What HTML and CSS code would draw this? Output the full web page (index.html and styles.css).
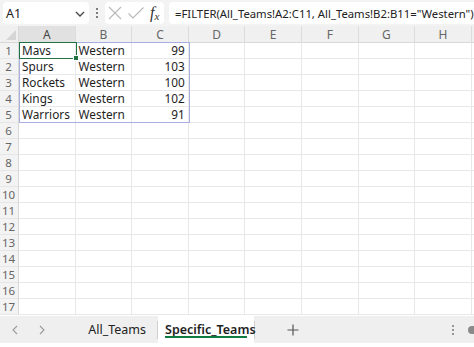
FILE: index.html
```html
<!DOCTYPE html>
<html>
<head>
<meta charset="utf-8">
<link rel="stylesheet" href="styles.css">
</head>
<body>
<div class="app">
  <div class="topbar">
    <div class="namebox">
      <span class="name">A1</span>
      <svg class="chev" width="10" height="6" viewBox="0 0 10 6"><path d="M1 1 L5 5 L9 1" fill="none" stroke="#444" stroke-width="1.3"/></svg>
    </div>
    <div class="vdots"><span></span><span></span><span></span></div>
    <div class="fxbox">
      <svg width="16" height="16" viewBox="0 0 16 16"><path d="M2 2 L14 14 M14 2 L2 14" stroke="#b8b8b8" stroke-width="1.1" fill="none"/></svg>
      <svg width="18" height="16" viewBox="0 0 18 16"><path d="M1.5 8.5 L6 13 L16.5 2.5" stroke="#b8b8b8" stroke-width="1.1" fill="none"/></svg>
      <span class="fx">f<sub>x</sub></span>
    </div>
    <div class="formula">=FILTER(All_Teams!A2:C11, All_Teams!B2:B11="Western")</div>
  </div>
  <div class="sheet">
    <div class="grid">
      <div class="corner"><svg width="10" height="10" viewBox="0 0 10 10"><path d="M10 0 L10 10 L0 10 Z" fill="#d6d6d6"/></svg></div>
      <div class="ch sel">A</div><div class="ch">B</div><div class="ch">C</div><div class="ch">D</div><div class="ch">E</div><div class="ch">F</div><div class="ch">G</div><div class="ch">H</div><div class="ch"></div>

      <div class="rh">1</div><div class="c">Mavs</div><div class="c">Western</div><div class="c n">99</div><div class="c"></div><div class="c"></div><div class="c"></div><div class="c"></div><div class="c"></div><div class="c"></div>
      <div class="rh">2</div><div class="c">Spurs</div><div class="c">Western</div><div class="c n">103</div><div class="c"></div><div class="c"></div><div class="c"></div><div class="c"></div><div class="c"></div><div class="c"></div>
      <div class="rh">3</div><div class="c">Rockets</div><div class="c">Western</div><div class="c n">100</div><div class="c"></div><div class="c"></div><div class="c"></div><div class="c"></div><div class="c"></div><div class="c"></div>
      <div class="rh">4</div><div class="c">Kings</div><div class="c">Western</div><div class="c n">102</div><div class="c"></div><div class="c"></div><div class="c"></div><div class="c"></div><div class="c"></div><div class="c"></div>
      <div class="rh">5</div><div class="c">Warriors</div><div class="c">Western</div><div class="c n">91</div><div class="c"></div><div class="c"></div><div class="c"></div><div class="c"></div><div class="c"></div><div class="c"></div>
      <div class="rh">6</div><div class="c"></div><div class="c"></div><div class="c"></div><div class="c"></div><div class="c"></div><div class="c"></div><div class="c"></div><div class="c"></div><div class="c"></div>
      <div class="rh">7</div><div class="c"></div><div class="c"></div><div class="c"></div><div class="c"></div><div class="c"></div><div class="c"></div><div class="c"></div><div class="c"></div><div class="c"></div>
      <div class="rh">8</div><div class="c"></div><div class="c"></div><div class="c"></div><div class="c"></div><div class="c"></div><div class="c"></div><div class="c"></div><div class="c"></div><div class="c"></div>
      <div class="rh">9</div><div class="c"></div><div class="c"></div><div class="c"></div><div class="c"></div><div class="c"></div><div class="c"></div><div class="c"></div><div class="c"></div><div class="c"></div>
      <div class="rh">10</div><div class="c"></div><div class="c"></div><div class="c"></div><div class="c"></div><div class="c"></div><div class="c"></div><div class="c"></div><div class="c"></div><div class="c"></div>
      <div class="rh">11</div><div class="c"></div><div class="c"></div><div class="c"></div><div class="c"></div><div class="c"></div><div class="c"></div><div class="c"></div><div class="c"></div><div class="c"></div>
      <div class="rh">12</div><div class="c"></div><div class="c"></div><div class="c"></div><div class="c"></div><div class="c"></div><div class="c"></div><div class="c"></div><div class="c"></div><div class="c"></div>
      <div class="rh">13</div><div class="c"></div><div class="c"></div><div class="c"></div><div class="c"></div><div class="c"></div><div class="c"></div><div class="c"></div><div class="c"></div><div class="c"></div>
      <div class="rh">14</div><div class="c"></div><div class="c"></div><div class="c"></div><div class="c"></div><div class="c"></div><div class="c"></div><div class="c"></div><div class="c"></div><div class="c"></div>
      <div class="rh">15</div><div class="c"></div><div class="c"></div><div class="c"></div><div class="c"></div><div class="c"></div><div class="c"></div><div class="c"></div><div class="c"></div><div class="c"></div>
      <div class="rh">16</div><div class="c"></div><div class="c"></div><div class="c"></div><div class="c"></div><div class="c"></div><div class="c"></div><div class="c"></div><div class="c"></div><div class="c"></div>
      <div class="rh">17</div><div class="c"></div><div class="c"></div><div class="c"></div><div class="c"></div><div class="c"></div><div class="c"></div><div class="c"></div><div class="c"></div><div class="c"></div>
    </div>
    <div class="spill"></div>
    <div class="active"><span class="handle"></span></div>
  </div>
  <div class="tabbar">
    <div class="nav">
      <svg width="8" height="10" viewBox="0 0 8 10"><path d="M6 1 L2 5 L6 9" fill="none" stroke="#9a9a9a" stroke-width="1.1"/></svg>
      <svg width="8" height="10" viewBox="0 0 8 10"><path d="M2 1 L6 5 L2 9" fill="none" stroke="#9a9a9a" stroke-width="1.1"/></svg>
    </div>
    <div class="tab first">All_Teams</div>
    <div class="sep"></div>
    <div class="tab cur">Specific_Teams</div>
    <div class="sep"></div>
    <div class="plus">
      <svg width="12" height="12" viewBox="0 0 12 12"><path d="M6 0.5 V11.5 M0.5 6 H11.5" stroke="#555" stroke-width="1.2"/></svg>
    </div>
    <div class="spacer"></div>
    <div class="vdots small"><span></span><span></span><span></span></div>
    <div class="thumb"></div>
  </div>
</div>
</body>
</html>
```

FILE: styles.css
```css
* { box-sizing: border-box; }
html, body { margin: 0; padding: 0; }
body {
  width: 474px;
  height: 347px;
  overflow: hidden;
  background: #ffffff;
  font-family: "Noto Sans", "Open Sans", sans-serif;
  color: #222;
}
.app { display: flex; flex-direction: column; width: 474px; height: 347px; }

.topbar {
  height: 26px;
  background: #f3f3f3;
  display: flex;
  align-items: center;
  padding: 2px 0 2px 3px;
  flex: none;
}
.namebox {
  width: 86px;
  height: 22px;
  background: #fff;
  border-radius: 4px;
  display: flex;
  align-items: center;
  justify-content: space-between;
  padding: 0 4px 0 3px;
  font-size: 12.5px;
  color: #222;
}
.namebox .chev { margin-top: 1px; }
.vdots {
  width: 16px;
  display: flex;
  flex-direction: column;
  align-items: center;
  gap: 2px;
}
.vdots span { width: 2px; height: 2px; background: #555; border-radius: 1px; display: block; }
.fxbox {
  width: 59px;
  height: 22px;
  background: #fff;
  border-radius: 4px;
  display: flex;
  align-items: center;
  gap: 4px;
  padding-left: 2px;
}
.fx {
  font-family: "Liberation Serif", "DejaVu Serif", serif;
  font-style: italic;
  font-size: 16px;
  color: #333;
  margin-left: 1px;
  line-height: 1;
}
.fx sub { font-size: 11px; vertical-align: -2px; }
.formula {
  flex: 1;
  height: 22px;
  margin-left: 5px;
  background: #fff;
  border-radius: 4px 0 0 4px;
  display: flex;
  align-items: center;
  padding-left: 6px;
  font-size: 11.3px;
  white-space: nowrap;
  overflow: hidden;
  color: #222;
}

.sheet { position: relative; flex: 1; overflow: hidden; }
.grid {
  display: grid;
  grid-template-columns: 19px repeat(8, 56.6px) 1fr;
  grid-template-rows: 17px;
  grid-auto-rows: 16px;
}
.corner {
  background: #f0f0f0;
  border-right: 1px solid #d8d8d8;
  border-bottom: 1px solid #d8d8d8;
  display: flex;
  align-items: flex-end;
  justify-content: flex-end;
  padding: 0 2px 2px 0;
}
.ch {
  background: #f0f0f0;
  border-right: 1px solid #dcdcdc;
  border-bottom: 1px solid #d8d8d8;
  font-size: 12px;
  color: #666;
  display: flex;
  align-items: center;
  justify-content: center;
}
.ch.sel { background: #e1e1e1; color: #444; }
.rh {
  background: #f3f3f3;
  border-right: 1px solid #d8d8d8;
  border-bottom: 1px solid #e6e6e6;
  font-size: 11.5px;
  color: #666;
  display: flex;
  align-items: center;
  justify-content: center;
  padding-right: 1px;
}
.c {
  border-right: 1px solid #e8e8e8;
  border-bottom: 1px solid #e8e8e8;
  font-size: 11.8px;
  line-height: 15px;
  color: #1e1e1e;
  display: flex;
  align-items: center;
  padding: 0 3px;
  white-space: nowrap;
  overflow: visible;
}
.c.n { justify-content: flex-end; }

.spill {
  position: absolute;
  left: 19px;
  top: 16px;
  width: 171px;
  height: 81px;
  border: 1px solid #a9aee0;
  pointer-events: none;
}
.active {
  position: absolute;
  left: 19px;
  top: 16px;
  width: 58px;
  height: 17px;
  border: 1.5px solid #217346;
}
.handle {
  position: absolute;
  right: -3px;
  bottom: -3px;
  width: 4px;
  height: 4px;
  background: #217346;
  border: 1px solid #fff;
  box-sizing: content-box;
}

.tabbar {
  flex: none;
  height: 27px;
  margin-bottom: 4px;
  background: #efefef;
  display: flex;
  align-items: center;
}
.nav {
  width: 70px;
  display: flex;
  gap: 19px;
  padding-left: 11px;
}
.tab {
  font-size: 12.5px;
  color: #222;
  height: 100%;
  display: flex;
  align-items: center;
}
.tab.first { width: 87px; justify-content: flex-end; padding-right: 11px; }
.tab.cur {
  background: #fff;
  font-weight: 600;
  color: #1e1e1e;
  position: relative;
  padding: 0 7px;
  width: 96px;
}
.tab.cur::after {
  content: "";
  position: absolute;
  left: 7px;
  right: 7px;
  bottom: 5px;
  height: 2px;
  background: #107c41;
}
.sep { width: 1px; height: 18px; background: #cfcfcf; }
.plus { width: 76px; display: flex; justify-content: center; }
.spacer { flex: 1; }
.vdots.small { width: 10px; margin-right: 10px; }
.vdots.small span { background: #777; }
.thumb {
  width: 6px;
  height: 8px;
  background: #8a8a8a;
  border-radius: 4px 0 0 4px;
}
```
